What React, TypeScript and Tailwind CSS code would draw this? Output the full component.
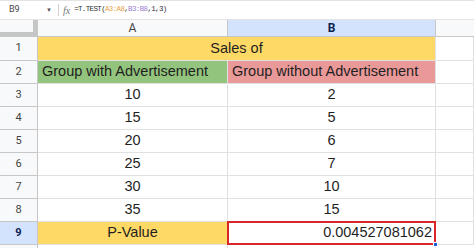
import React from "react";

const ROWS: { n: number; a: string; b: string }[] = [
	{ n: 3, a: "10", b: "2" },
	{ n: 4, a: "15", b: "5" },
	{ n: 5, a: "20", b: "6" },
	{ n: 6, a: "25", b: "7" },
	{ n: 7, a: "30", b: "10" },
	{ n: 8, a: "35", b: "15" },
];

const cell = "border-r border-b border-[#e1e1e1] flex items-center";
const rowHead =
	"border-r border-b border-[#c7c7c7] bg-[#f8f9fa] flex items-center justify-center text-[11px] text-[#444] font-['Roboto',sans-serif]";

const App: React.FC = () => {
	return (
		<div className="w-[474px] h-[248px] overflow-hidden bg-white font-['Liberation_Sans',Arial,sans-serif] text-[#1f1f1f]">
			{/* Formula bar */}
			<div className="h-[20px] flex items-center border-t border-b border-[#e3e3e3] text-[#444]">
				<span className="w-[46px] pl-[9px] text-[9px] font-['Roboto',sans-serif]">B9</span>
				<span className="text-[6px] text-[#555]">▼</span>
				<span className="ml-[6px] h-[12px] border-l border-[#d0d0d0]" />
				<span className="ml-[4px] italic text-[10px] font-['Liberation_Serif',serif] text-[#777]">fx</span>
				<span className="ml-[4px] text-[7.5px] tracking-[-0.65px] font-['Liberation_Mono',monospace] text-[#333] whitespace-pre">
					=T.TEST(<span className="text-[#eaa44a]">A3:A8</span>,<span className="text-[#9d7fd0]">B3:B8</span>,1,3)
				</span>
			</div>

			<div className="grid grid-cols-[38px_190px_208px_38px] grid-rows-[17px_24px_repeat(8,23px)_10px] text-[14.5px]">
				{/* Column header row */}
				<div className="relative bg-[#f8f9fa] border-r border-b border-[#c7c7c7]">
					<div className="absolute right-0 top-0 h-full w-[4px] bg-[#c4c7c5]" />
					<div className="absolute left-0 bottom-0 w-full h-[4px] bg-[#c4c7c5]" />
				</div>
				<div className="bg-[#f8f9fa] border-r border-b border-[#c7c7c7] flex items-center justify-center text-[12px] text-[#444] font-['Roboto',sans-serif]">
					A
				</div>
				<div className="bg-[#d3e3fd] border-r border-b border-[#c7c7c7] flex items-center justify-center text-[12px] font-bold text-[#0b1f4f] font-['Roboto',sans-serif]">
					B
				</div>
				<div className="bg-[#f8f9fa] border-b border-[#c7c7c7]" />

				{/* Row 1 */}
				<div className={rowHead}>1</div>
				<div className={`${cell} col-span-2 bg-[#ffd966] justify-center`}>Sales of</div>
				<div className={cell} />

				{/* Row 2 */}
				<div className={rowHead}>2</div>
				<div className={`${cell} bg-[#93c47d] pl-[4px]`}>Group with Advertisement</div>
				<div className={`${cell} bg-[#ea9999] pl-[4px]`}>Group without Advertisement</div>
				<div className={cell} />

				{ROWS.map((r) => (
					<React.Fragment key={r.n}>
						<div className={rowHead}>{r.n}</div>
						<div className={`${cell} justify-center`}>{r.a}</div>
						<div className={`${cell} justify-center`}>{r.b}</div>
						<div className={cell} />
					</React.Fragment>
				))}

				{/* Row 9 */}
				<div className="border-r border-b border-[#c7c7c7] bg-[#d3e3fd] flex items-center justify-center text-[11px] font-bold text-[#0b1f4f] font-['Roboto',sans-serif]">
					9
				</div>
				<div className={`${cell} bg-[#ffd966] justify-center`}>P-Value</div>
				<div className="relative border-r border-b border-[#e1e1e1]">
					<div className="absolute -left-[1px] -top-[1px] -right-[1px] -bottom-[1px] border-2 border-[#d9262b] flex items-center justify-end pr-[2px]">
						0.004527081062
					</div>
					<div className="absolute -right-[3px] -bottom-[3px] w-[5px] h-[5px] bg-[#1a5fd6] border border-white" />
				</div>
				<div className={cell} />

				{/* Row 10 */}
				<div className="border-r border-[#c7c7c7] bg-[#f8f9fa]" />
				<div className="border-r border-[#e1e1e1]" />
				<div className="border-r border-[#e1e1e1]" />
				<div />
			</div>
		</div>
	);
};

export default App;
